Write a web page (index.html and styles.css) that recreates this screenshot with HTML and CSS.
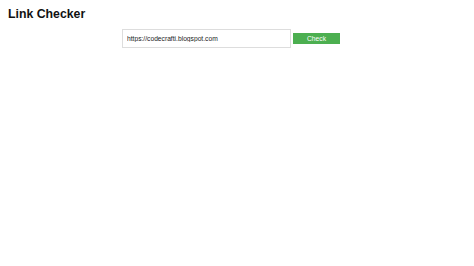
FILE: index.html
```html
<!DOCTYPE html>
<html lang="en">
<head>
    <meta charset="UTF-8">
    <meta name="viewport" content="width=device-width, initial-scale=1.0">
    <title>Link Checker</title>
    <link rel="stylesheet" href="styles.css">
</head>
<body>
    <h1>Link Checker</h1>
    <form class="checker" id="checker">
        <input type="text" id="url" value="https://codecrafti.blogspot.com">
        <button type="submit" id="check">Check</button>
    </form>
</body>
</html>
```

FILE: styles.css
```css
* {
    margin: 0;
    padding: 0;
    box-sizing: border-box;
}

body {
    padding: 7px 8px;
    background-color: #fff;
    font-family: "Liberation Sans", Arial, sans-serif;
}

h1 {
    font-size: 12.3px;
    font-weight: bold;
    color: #111;
    line-height: 15px;
}

.checker {
    display: flex;
    justify-content: center;
    align-items: center;
    gap: 2px;
    margin-top: 7px;
    padding-right: 12px;
}

#url {
    width: 169px;
    height: 19px;
    padding: 0 4px;
    border: 1px solid #ddd;
    font-family: inherit;
    font-size: 6.7px;
    color: #222;
}

#check {
    width: 47px;
    height: 11px;
    border: none;
    background-color: #4caf50;
    color: #fff;
    font-family: inherit;
    font-size: 6.7px;
}
```
